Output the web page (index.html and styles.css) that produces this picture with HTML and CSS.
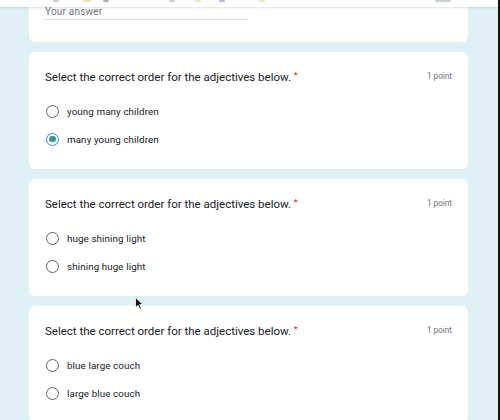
FILE: index.html
```html
<!DOCTYPE html>
<html>
<head>
<meta charset="utf-8">
<link rel="stylesheet" href="styles.css">
</head>
<body>
<div class="topbar">
  <span class="bit b1"></span><span class="bit b2"></span><span class="bit b3"></span><span class="bit b4"></span><span class="bit b5"></span><span class="bit b6"></span><span class="bit b7"></span><span class="bit b8"></span>
</div>
<div class="edge"></div>
<main class="form">
  <section class="card card-first">
    <div class="answer">Your answer</div>
  </section>

  <section class="card">
    <div class="qhead">
      <div class="qtitle">Select the correct order for the adjectives below. <span class="req">*</span></div>
      <div class="points">1 point</div>
    </div>
    <ul class="options">
      <li class="opt"><span class="radio"></span><span>young many children</span></li>
      <li class="opt"><span class="radio checked"></span><span>many young children</span></li>
    </ul>
  </section>

  <section class="card">
    <div class="qhead">
      <div class="qtitle">Select the correct order for the adjectives below. <span class="req">*</span></div>
      <div class="points">1 point</div>
    </div>
    <ul class="options">
      <li class="opt"><span class="radio"></span><span>huge shining light</span></li>
      <li class="opt"><span class="radio"></span><span>shining huge light</span></li>
    </ul>
  </section>

  <section class="card">
    <div class="qhead">
      <div class="qtitle">Select the correct order for the adjectives below. <span class="req">*</span></div>
      <div class="points">1 point</div>
    </div>
    <ul class="options">
      <li class="opt"><span class="radio"></span><span>blue large couch</span></li>
      <li class="opt"><span class="radio"></span><span>large blue couch</span></li>
    </ul>
  </section>
</main>
<svg class="cursor" width="9" height="13" viewBox="0 0 9 13"><path d="M0.5 0.5 L0.5 10.5 L3 8.2 L4.8 12.3 L6.4 11.6 L4.7 7.6 L8 7.6 Z" fill="#111" stroke="#fff" stroke-width="0.8"/></svg>
</body>
</html>
```

FILE: styles.css
```css
html, body {
  margin: 0;
  padding: 0;
}
body {
  width: 500px;
  height: 420px;
  overflow: hidden;
  background: #dff1f7;
  font-family: Roboto, "Liberation Sans", Arial, sans-serif;
  color: #202124;
  position: relative;
}
.topbar {
  position: absolute;
  left: 0;
  top: 0;
  width: 500px;
  height: 7px;
  background: #fff;
  box-shadow: 0 1px 2px rgba(0,0,0,0.12);
  z-index: 5;
  display: flex;
  align-items: flex-start;
}
.bit {
  display: block;
  height: 2px;
  width: 6px;
  border-radius: 1px;
  opacity: 0.5;
}
.b1 { margin-left: 53px; background: #9aa0a6; }
.b2 { margin-left: 24px; background: #e0c070; width: 8px; }
.b3 { margin-left: 12px; background: #5f6368; }
.b4 { margin-left: 60px; background: #9aa0a6; }
.b5 { margin-left: 20px; background: #e6cf80; }
.b6 { margin-left: 18px; background: #8a6fb0; }
.b7 { margin-left: 34px; background: #e6cf80; }
.b8 { margin-left: 170px; background: #90a89a; width: 16px; }
.edge {
  position: absolute;
  right: 0;
  top: 0;
  width: 2px;
  height: 420px;
  background: #111;
  z-index: 6;
}
.form {
  margin: 0;
  padding: 0 0 0 29px;
  width: 439px;
  display: flex;
  flex-direction: column;
  gap: 10px;
}
.card {
  background: #fff;
  border-radius: 6px;
  padding: 17px 16px 16px 16px;
  box-sizing: border-box;
  height: 117px;
  flex: none;
}
.card-first {
  height: 42px;
  padding: 5px 16px 0 16px;
  border-radius: 0 0 6px 6px;
}
.answer {
  width: 203px;
  font-size: 10px;
  line-height: 13px;
  color: #70757a;
  letter-spacing: 0.2px;
  padding-bottom: 1px;
  border-bottom: 1px solid #e3e3e3;
}
.qhead {
  display: flex;
  justify-content: space-between;
  align-items: center;
  height: 14px;
}
.qtitle {
  font-size: 11.5px;
  line-height: 14px;
  color: #202124;
}
.req {
  color: #d93025;
  font-size: 9px;
  vertical-align: 2px;
}
.points {
  font-size: 8.2px;
  color: #70757a;
}
.options {
  list-style: none;
  margin: 14px 0 0 0;
  padding: 0;
}
.opt {
  display: flex;
  align-items: center;
  height: 28px;
  gap: 8px;
  font-size: 9.8px;
  letter-spacing: 0.1px;
  color: #202124;
}
.radio {
  box-sizing: border-box;
  width: 13px;
  height: 13px;
  margin-left: 1px;
  border: 1.6px solid #5f6368;
  border-radius: 50%;
  flex: none;
  display: flex;
  align-items: center;
  justify-content: center;
}
.radio.checked {
  border-color: #3a8ea5;
}
.radio.checked::after {
  content: "";
  width: 6.5px;
  height: 6.5px;
  border-radius: 50%;
  background: #3a8ea5;
}
.cursor {
  position: absolute;
  left: 135px;
  top: 297px;
  z-index: 7;
}
```
